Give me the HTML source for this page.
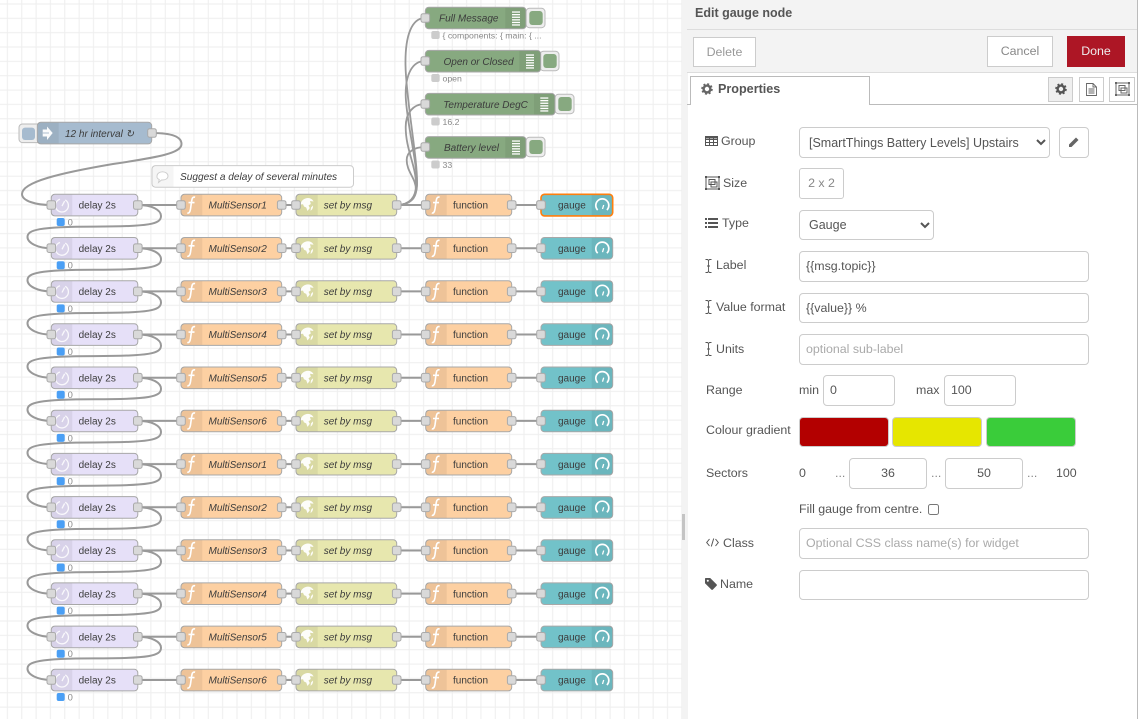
<!DOCTYPE html>
<html lang="en"><head><meta charset="utf-8"><title>Edit gauge node</title>
<style>
html,body{margin:0;padding:0;width:1138px;height:719px;overflow:hidden;background:#fff;font-family:"Liberation Sans",Arial,sans-serif}
#c{position:absolute;left:0;top:0}
#c text{font-family:"Liberation Sans",Arial,sans-serif;font-size:10px;fill:#3c3c3c}
#c text.it{font-style:italic}
#c text.st{font-size:8.7px;fill:#888}
#c text.z{font-size:9.4px;fill:#888}
.w{fill:none;stroke:#999;stroke-width:2}
.n{stroke:#a8a8a8;stroke-width:1}
.p{fill:#d9d9d9;stroke:#aaa;stroke-width:1}
#strip{position:absolute;left:682px;top:0;width:6px;height:719px;background:#f3f3f3}
#grip{position:absolute;left:682px;top:514px;width:3px;height:26px;background:#c4c4c4}
#panel{position:absolute;left:688px;top:0;width:449px;height:719px;background:#fff;border-right:1px solid #bbb;box-sizing:content-box}
#head{position:absolute;left:687px;top:0;width:450px;height:72px;background:#f3f3f3;border-bottom:1px solid #ddd}
#hl{position:absolute;left:687px;top:29px;width:450px;height:1px;background:#ddd}
.t,.b,.i{position:absolute;box-sizing:border-box;font-size:12.4px;color:#555}
.t{line-height:16px;white-space:nowrap}
.b{background:#fff;border:1px solid #ccc;text-align:center}
.i{background:#fff;border:1px solid #ccc;border-radius:4px;padding-left:6px;line-height:28px;height:30px;white-space:nowrap}
.ph{color:#aaa}
select.i{padding:0 0 0 5px;font-family:"Liberation Sans",Arial,sans-serif;font-size:12.5px;appearance:auto;outline:0}
.c{position:absolute;box-sizing:border-box;height:30px;width:90px;top:417px;border:1px solid #ccc;border-radius:4px}
svg.ic{position:absolute;overflow:visible}
</style></head><body>
<svg id="c" width="682" height="719" viewBox="0 0 682 719">
<defs>
<pattern id="g" width="14.35" height="14.35" patternUnits="userSpaceOnUse" x="0.2" y="-3.2"><path d="M7.2 0V14.35M0 7.2H14.35" stroke="#eee" stroke-width="1" fill="none"/></pattern>
<g id="wires"><path class="w" d="M138 0H181M282 0H296M397 0H425.7M512 0H541"/></g>
<g id="loop"><path class="w" d="M138 0C152 0 161 5 161 11C161 19 150 21.6 94 21.6C38 21.6 27.5 25 27.5 32C27.5 38 38 43.2 51 43.2"/></g>
<g id="timer"><path d="M3.2 -5.6A6.5 6.5 0 1 1 -2 -6.2" fill="none" stroke="#fff" stroke-opacity=".85" stroke-width="1.3"/><path d="M0 0.6L2.6 -4.4" stroke="#fff" stroke-opacity=".85" stroke-width="1.3"/></g>
<g id="fn"><path d="M3.6 -7.8C1 -8.5 .5 -6.5 0 -3L-1 4C-1.5 7 -2.5 8.6 -4.2 7.9M-3 -2.4H3" fill="none" stroke="#fff" stroke-width="1.6"/></g>
<g id="globe"><path d="M-6.5 -0.5C-6 -4.5 -2.5 -7 1 -7C3.5 -7 5.8 -5.5 6.5 -3.5L3 -4L3.8 -1L1.5 0.5L2.8 3L0.5 6L-0.8 2.5L-3 1.5L-4 -0.8Z" fill="#fff" fill-opacity=".95"/><path d="M4 2.5L6 0.5C6.3 2.5 5.5 4.5 3.5 5.8Z" fill="#fff" fill-opacity=".9"/></g>
<g id="gg"><path d="M-4.6 5A6.5 6.5 0 1 1 4.6 5" fill="none" stroke="#fff" stroke-width="1.7"/><path d="M0.2 4L1.4 0" stroke="#fff" stroke-width="1.3"/></g>
<g id="row">
<rect class="n" x="51.3" y="-10.7" width="86.5" height="21.6" rx="3.5" fill="#e6e0f8"/><path d="M51.8 -10.2H72.3V10.4H51.8Z" fill="#000" fill-opacity=".06"/>
<use href="#timer" x="62" y="0.5"/>
<rect class="n" x="181" y="-10.7" width="100.7" height="21.6" rx="3.5" fill="#fdd0a2"/><path d="M181.5 -10.2H202.3V10.4H181.5Z" fill="#000" fill-opacity=".06"/>
<use href="#fn" x="191.5"/>
<rect class="n" x="296" y="-10.7" width="100.7" height="21.6" rx="3.5" fill="#e7e7ae"/><path d="M296.5 -10.2H317.7V10.4H296.5Z" fill="#000" fill-opacity=".06"/>
<use href="#globe" x="307"/>
<rect class="n" x="425.7" y="-10.7" width="86" height="21.6" rx="3.5" fill="#fdd0a2"/><path d="M426.2 -10.2H446.7V10.4H426.2Z" fill="#000" fill-opacity=".06"/>
<use href="#fn" x="436"/>
<rect class="n" x="541" y="-10.7" width="71.7" height="21.6" rx="3.5" fill="#72c2c9"/><path d="M591.7 -10.2H612.2V10.4H591.7Z" fill="#000" fill-opacity=".06"/>
<use href="#gg" x="602.3"/>
<rect class="p" x="47" y="-4.3" width="8.6" height="8.6" rx="2"/><rect class="p" x="133.5" y="-4.3" width="8.6" height="8.6" rx="2"/>
<rect class="p" x="176.7" y="-4.3" width="8.6" height="8.6" rx="2"/><rect class="p" x="277.4" y="-4.3" width="8.6" height="8.6" rx="2"/>
<rect class="p" x="291.7" y="-4.3" width="8.6" height="8.6" rx="2"/><rect class="p" x="392.4" y="-4.3" width="8.6" height="8.6" rx="2"/>
<rect class="p" x="421.4" y="-4.3" width="8.6" height="8.6" rx="2"/><rect class="p" x="507.4" y="-4.3" width="8.6" height="8.6" rx="2"/>
<rect class="p" x="536.7" y="-4.3" width="8.6" height="8.6" rx="2"/>
<rect x="56.7" y="13" width="8" height="8" rx="2" fill="#4a9ff5"/>
</g>
<g id="bars" fill="#fff"><rect x="-4" y="-6.6" width="8" height="1.3"/><rect x="-4" y="-4" width="8" height="1.3"/><rect x="-4" y="-1.4" width="8" height="1.3"/><rect x="-4" y="1.2" width="8" height="1.3"/><rect x="-4" y="3.8" width="8" height="1.3"/><rect x="-4" y="6.3" width="8" height="1.3"/></g>
<g id="btn"><rect x="0" y="-9.7" width="19" height="19.4" rx="3.5" fill="#eee" stroke="#bbb"/><rect x="3.3" y="-7" width="13.4" height="14" rx="3" fill="#87a980"/></g>
</defs>
<rect width="682" height="719" fill="url(#g)"/>

<path class="w" d="M152 133C172 133 181.5 137 181.5 144C181.5 153 160 157 113 164C60 173 22 182 22 194C22 201 36 205 51 205"/>
<path class="w" style="stroke-width:1.8" d="M397 205C410 205 416 197 417 185C418 160 406 100 405.5 65C405 35 412 18 425 18"/>
<path class="w" style="stroke-width:1.8" d="M397 205C410 205 417 197 417 185C417 160 406 120 405.7 95C405.5 75 412 61 425 61"/>
<path class="w" style="stroke-width:1.8" d="M397 205C410 205 416 197 416 185C416 165 405.7 150 405.7 127C405.7 113 413 104 425 104"/>
<path class="w" style="stroke-width:1.8" d="M397 205C410 205 416 198 416 190C416 178 406.7 172 406.7 160C406.7 152 414 147 425 147"/>

<g transform="translate(0,205)"><use href="#loop"/><use href="#wires"/></g>
<g transform="translate(0,248.2)"><use href="#loop"/><use href="#wires"/></g>
<g transform="translate(0,291.4)"><use href="#loop"/><use href="#wires"/></g>
<g transform="translate(0,334.5)"><use href="#loop"/><use href="#wires"/></g>
<g transform="translate(0,377.7)"><use href="#loop"/><use href="#wires"/></g>
<g transform="translate(0,420.9)"><use href="#loop"/><use href="#wires"/></g>
<g transform="translate(0,464.1)"><use href="#loop"/><use href="#wires"/></g>
<g transform="translate(0,507.3)"><use href="#loop"/><use href="#wires"/></g>
<g transform="translate(0,550.5)"><use href="#loop"/><use href="#wires"/></g>
<g transform="translate(0,593.6)"><use href="#loop"/><use href="#wires"/></g>
<g transform="translate(0,636.8)"><use href="#loop"/><use href="#wires"/></g>
<g transform="translate(0,680)"><use href="#wires"/></g>

<!-- inject -->
<rect x="19" y="124" width="22" height="18.6" rx="3.5" fill="#eee" stroke="#bbb"/>
<rect x="22" y="127.6" width="13" height="12.4" rx="3" fill="#a6bbcf"/>
<rect class="n" x="37.3" y="122.3" width="114.4" height="21.6" rx="3.5" fill="#a6bbcf"/>
<path d="M37.8 122.8H58.7V143.4H37.8Z" fill="#000" fill-opacity=".06"/>
<path d="M42.7 129.5H47V126.5L52.7 133L47 140V136.5H42.7Z" fill="#fff" fill-opacity=".95"/><path d="M42.7 133H49" stroke="#98aec2" stroke-width=".8"/>
<text class="it" x="65" y="136.8">12 hr interval ↻</text>
<rect class="p" x="147.7" y="128.7" width="8.6" height="8.6" rx="2"/>

<!-- comment -->
<rect x="152" y="165.6" width="201.5" height="21.6" rx="3.5" fill="#fff" stroke="#ccc"/>
<path d="M152.5 166.1H173.5V186.7H152.5Z" fill="#000" fill-opacity=".04"/>
<path d="M157 176c0-2.5 2.5-4.2 5.5-4.2s5.5 1.7 5.5 4.2-2.5 4-5.5 4h-1l-3 2.5 .8-3c-1.5-.6-2.3-1.5-2.3-2.5z" fill="#fff" stroke="#ccc" stroke-width=".9"/>
<text class="it" x="180" y="179.8" style="font-size:10.1px">Suggest a delay of several minutes</text>

<!-- debug -->
<use href="#btn" x="526" y="18"/>
<rect class="n" x="425.3" y="7.2" width="100.7" height="21.6" rx="3.5" fill="#87a980"/><path d="M505.3 7.7H525.5V28.3H505.3Z" fill="#000" fill-opacity=".06"/><use href="#bars" x="516" y="18"/>
<rect class="p" x="421" y="13.7" width="8.6" height="8.6" rx="2"/>
<text class="it" x="439" y="21.5">Full Message</text>
<rect x="431.3" y="31" width="8.4" height="8" rx="2" fill="#ccc"/><text class="st" x="442.5" y="38.3">{ components: { main: { ...</text>

<use href="#btn" x="540" y="61"/>
<rect class="n" x="425.3" y="50.4" width="115.4" height="21.6" rx="3.5" fill="#87a980"/><path d="M519.3 50.9H540.2V71.5H519.3Z" fill="#000" fill-opacity=".06"/><use href="#bars" x="530" y="61"/>
<rect class="p" x="421" y="56.7" width="8.6" height="8.6" rx="2"/>
<text class="it" x="443.5" y="65">Open or Closed</text>
<rect x="431.3" y="74" width="8.4" height="8" rx="2" fill="#ccc"/><text class="st" x="442.5" y="81.3">open</text>

<use href="#btn" x="555" y="104"/>
<rect class="n" x="425.3" y="93.4" width="129.7" height="21.6" rx="3.5" fill="#87a980"/><path d="M534 93.9H554.5V114.5H534Z" fill="#000" fill-opacity=".06"/><use href="#bars" x="544.3" y="104"/>
<rect class="p" x="421" y="99.7" width="8.6" height="8.6" rx="2"/>
<text class="it" x="443.2" y="108">Temperature DegC</text>
<rect x="431.3" y="117.5" width="8.4" height="8" rx="2" fill="#ccc"/><text class="st" x="442.5" y="124.8">16.2</text>

<use href="#btn" x="526" y="147"/>
<rect class="n" x="425.3" y="136.6" width="100.7" height="21.6" rx="3.5" fill="#87a980"/><path d="M505.3 137.1H525.5V157.7H505.3Z" fill="#000" fill-opacity=".06"/><use href="#bars" x="516" y="147"/>
<rect class="p" x="421" y="142.7" width="8.6" height="8.6" rx="2"/>
<text class="it" x="444" y="151">Battery level</text>
<rect x="431.3" y="160.5" width="8.4" height="8" rx="2" fill="#ccc"/><text class="st" x="442.5" y="167.8">33</text>

<!-- rows -->
<g transform="translate(0,205)"><use href="#row"/><text x="78.6" y="3.7">delay 2s</text><text class="z" x="67.6" y="20.4">0</text><text class="it" x="208.5" y="3.7">MultiSensor1</text><text class="it" x="323.7" y="3.7">set by msg</text><text x="453" y="3.7">function</text><text x="558" y="3.7">gauge</text></g>
<rect x="541" y="194.3" width="71.7" height="21.6" rx="3.5" fill="none" stroke="#ff7f0e" stroke-width="1.6"/><rect class="p" x="536.7" y="200.7" width="8.6" height="8.6" rx="2"/>
<g transform="translate(0,248.2)"><use href="#row"/><text x="78.6" y="3.7">delay 2s</text><text class="z" x="67.6" y="20.4">0</text><text class="it" x="208.5" y="3.7">MultiSensor2</text><text class="it" x="323.7" y="3.7">set by msg</text><text x="453" y="3.7">function</text><text x="558" y="3.7">gauge</text></g>
<g transform="translate(0,291.4)"><use href="#row"/><text x="78.6" y="3.7">delay 2s</text><text class="z" x="67.6" y="20.4">0</text><text class="it" x="208.5" y="3.7">MultiSensor3</text><text class="it" x="323.7" y="3.7">set by msg</text><text x="453" y="3.7">function</text><text x="558" y="3.7">gauge</text></g>
<g transform="translate(0,334.5)"><use href="#row"/><text x="78.6" y="3.7">delay 2s</text><text class="z" x="67.6" y="20.4">0</text><text class="it" x="208.5" y="3.7">MultiSensor4</text><text class="it" x="323.7" y="3.7">set by msg</text><text x="453" y="3.7">function</text><text x="558" y="3.7">gauge</text></g>
<g transform="translate(0,377.7)"><use href="#row"/><text x="78.6" y="3.7">delay 2s</text><text class="z" x="67.6" y="20.4">0</text><text class="it" x="208.5" y="3.7">MultiSensor5</text><text class="it" x="323.7" y="3.7">set by msg</text><text x="453" y="3.7">function</text><text x="558" y="3.7">gauge</text></g>
<g transform="translate(0,420.9)"><use href="#row"/><text x="78.6" y="3.7">delay 2s</text><text class="z" x="67.6" y="20.4">0</text><text class="it" x="208.5" y="3.7">MultiSensor6</text><text class="it" x="323.7" y="3.7">set by msg</text><text x="453" y="3.7">function</text><text x="558" y="3.7">gauge</text></g>
<g transform="translate(0,464.1)"><use href="#row"/><text x="78.6" y="3.7">delay 2s</text><text class="z" x="67.6" y="20.4">0</text><text class="it" x="208.5" y="3.7">MultiSensor1</text><text class="it" x="323.7" y="3.7">set by msg</text><text x="453" y="3.7">function</text><text x="558" y="3.7">gauge</text></g>
<g transform="translate(0,507.3)"><use href="#row"/><text x="78.6" y="3.7">delay 2s</text><text class="z" x="67.6" y="20.4">0</text><text class="it" x="208.5" y="3.7">MultiSensor2</text><text class="it" x="323.7" y="3.7">set by msg</text><text x="453" y="3.7">function</text><text x="558" y="3.7">gauge</text></g>
<g transform="translate(0,550.5)"><use href="#row"/><text x="78.6" y="3.7">delay 2s</text><text class="z" x="67.6" y="20.4">0</text><text class="it" x="208.5" y="3.7">MultiSensor3</text><text class="it" x="323.7" y="3.7">set by msg</text><text x="453" y="3.7">function</text><text x="558" y="3.7">gauge</text></g>
<g transform="translate(0,593.6)"><use href="#row"/><text x="78.6" y="3.7">delay 2s</text><text class="z" x="67.6" y="20.4">0</text><text class="it" x="208.5" y="3.7">MultiSensor4</text><text class="it" x="323.7" y="3.7">set by msg</text><text x="453" y="3.7">function</text><text x="558" y="3.7">gauge</text></g>
<g transform="translate(0,636.8)"><use href="#row"/><text x="78.6" y="3.7">delay 2s</text><text class="z" x="67.6" y="20.4">0</text><text class="it" x="208.5" y="3.7">MultiSensor5</text><text class="it" x="323.7" y="3.7">set by msg</text><text x="453" y="3.7">function</text><text x="558" y="3.7">gauge</text></g>
<g transform="translate(0,680)"><use href="#row"/><text x="78.6" y="3.7">delay 2s</text><text class="z" x="67.6" y="20.4">0</text><text class="it" x="208.5" y="3.7">MultiSensor6</text><text class="it" x="323.7" y="3.7">set by msg</text><text x="453" y="3.7">function</text><text x="558" y="3.7">gauge</text></g>
</svg>

<div id="strip"></div><div id="grip"></div>
<div id="panel"></div>
<div id="head"></div><div id="hl"></div>

<div class="t" style="left:695px;top:5px;font-weight:bold;font-size:12.5px">Edit gauge node</div>
<div class="b" style="left:693px;top:37px;width:63px;height:30px;line-height:28px;color:#999">Delete</div>
<div class="b" style="left:987px;top:36px;width:66px;height:31px;line-height:29px;color:#888">Cancel</div>
<div class="b" style="left:1067px;top:36px;width:58px;height:31px;line-height:29px;background:#ad1625;border-color:#ad1625;color:#eee">Done</div>

<div style="position:absolute;left:687px;top:104px;width:450px;height:1px;background:#bbb"></div>
<div style="position:absolute;left:690px;top:76px;width:180px;height:29px;box-sizing:border-box;background:#fff;border:1px solid #bbb;border-bottom:0"></div>
<div class="t" style="left:718px;top:81px;font-weight:bold;font-size:12.6px">Properties</div>
<svg class="ic" style="left:701px;top:83px" width="12" height="12" viewBox="-6 -6 12 12"><circle r="3.4" fill="none" stroke="#666" stroke-width="2.4"/><circle r="4.9" fill="none" stroke="#666" stroke-width="1.8" stroke-dasharray="2 1.85"/></svg>

<div class="b" style="left:1048px;top:77px;width:25px;height:25px;background:#efefef"></div>
<svg class="ic" style="left:1055px;top:83px" width="12" height="12" viewBox="-6 -6 12 12"><circle r="3.4" fill="none" stroke="#555" stroke-width="2.4"/><circle r="4.9" fill="none" stroke="#555" stroke-width="1.8" stroke-dasharray="2 1.85"/></svg>
<div class="b" style="left:1079px;top:77px;width:25px;height:25px"></div>
<svg class="ic" style="left:1086px;top:83px" width="11" height="13" viewBox="0 0 11 13"><path d="M.5 .5H7L10.5 4V12.5H.5ZM7 .5V4H10.5M2.5 6H8.5M2.5 8H8.5M2.5 10H8.5" fill="none" stroke="#666" stroke-width=".9"/></svg>
<div class="b" style="left:1109px;top:77px;width:26px;height:25px"></div>
<svg class="ic" style="left:1115px;top:82px" width="15" height="14" viewBox="0 0 15 14"><path d="M1 1H14V13H1ZM4 3.5H10V8.5H4ZM6 6H12V11H6Z" fill="none" stroke="#666" stroke-width="1"/><path d="M0 0h2v2H0zM13 0h2v2h-2zM0 12h2v2H0zM13 12h2v2h-2z" fill="#666"/></svg>

<!-- Group -->
<svg class="ic" style="left:705px;top:136px" width="13" height="10" viewBox="0 0 13 10"><path d="M.5 .5H12.5V9.5H.5ZM.5 3.5H12.5M.5 6.5H12.5M4.5 .5V9.5M8.5 .5V9.5" fill="none" stroke="#555" stroke-width="1"/><path d="M0 0H13V2.5H0Z" fill="#555"/></svg>
<div class="t" style="left:721px;top:133px">Group</div>
<select class="i" style="left:799px;top:127px;width:251px;height:31px"><option>[SmartThings Battery Levels] Upstairs</option></select>
<div class="b" style="left:1059px;top:127px;width:30px;height:31px;border-radius:4px"></div>
<svg class="ic" style="left:1068px;top:136px" width="12" height="12" viewBox="0 0 12 12"><path d="M1 8.5L8 1.5L10.5 4L3.5 11H1Z" fill="#666"/></svg>

<!-- Size -->
<svg class="ic" style="left:705px;top:176px" width="15" height="14" viewBox="0 0 15 14"><path d="M1 1H14V13H1ZM4 3.5H10V8.5H4ZM6 6H12V11H6Z" fill="none" stroke="#555" stroke-width="1"/><path d="M0 0h2v2H0zM13 0h2v2h-2zM0 12h2v2H0zM13 12h2v2h-2z" fill="#555"/></svg>
<div class="t" style="left:723px;top:174.5px">Size</div>
<div class="b" style="left:799px;top:168px;width:45px;height:31px;line-height:29px;border-radius:3px;color:#888">2 x 2</div>

<!-- Type -->
<svg class="ic" style="left:705px;top:218px" width="13" height="10" viewBox="0 0 13 10"><path d="M0 0h2v2H0zM0 4h2v2H0zM0 8h2v2H0zM3 0h10v2H3zM3 4h10v2H3zM3 8h10v2H3z" fill="#555"/></svg>
<div class="t" style="left:722px;top:215px">Type</div>
<select class="i" style="left:799px;top:210px;width:135px;height:30px"><option>Gauge</option></select>

<!-- Label etc -->
<svg class="ic" style="left:705px;top:259px" width="7" height="14" viewBox="0 0 7 14"><path d="M.5 .5H2.5L3.5 1.5L4.5 .5H6.5M.5 13.5H2.5L3.5 12.5L4.5 13.5H6.5M3.5 1.5V12.5M2 7H5" fill="none" stroke="#555" stroke-width=".9"/></svg>
<div class="t" style="left:716px;top:257px">Label</div>
<div class="i" style="left:799px;top:251px;width:290px;height:31px;line-height:29px">{{msg.topic}}</div>

<svg class="ic" style="left:705px;top:300px" width="7" height="14" viewBox="0 0 7 14"><path d="M.5 .5H2.5L3.5 1.5L4.5 .5H6.5M.5 13.5H2.5L3.5 12.5L4.5 13.5H6.5M3.5 1.5V12.5M2 7H5" fill="none" stroke="#555" stroke-width=".9"/></svg>
<div class="t" style="left:716px;top:298.5px">Value format</div>
<div class="i" style="left:799px;top:293px;width:290px;">{{value}} %</div>

<svg class="ic" style="left:705px;top:342px" width="7" height="14" viewBox="0 0 7 14"><path d="M.5 .5H2.5L3.5 1.5L4.5 .5H6.5M.5 13.5H2.5L3.5 12.5L4.5 13.5H6.5M3.5 1.5V12.5M2 7H5" fill="none" stroke="#555" stroke-width=".9"/></svg>
<div class="t" style="left:716px;top:340.5px">Units</div>
<div class="i ph" style="left:799px;top:334px;width:290px;height:31px;line-height:29px">optional sub-label</div>

<!-- Range -->
<div class="t" style="left:706px;top:381.5px">Range</div>
<div class="t" style="left:799px;top:381.5px">min</div>
<div class="i" style="left:823px;top:375px;width:72px;height:31px;line-height:29px">0</div>
<div class="t" style="left:916px;top:381.5px">max</div>
<div class="i" style="left:944px;top:375px;width:72px;height:31px;line-height:29px">100</div>

<!-- Colour -->
<div class="t" style="left:706px;top:422px">Colour gradient</div>
<div class="c" style="left:799px;background:#b30000"></div>
<div class="c" style="left:892px;background:#e6e600"></div>
<div class="c" style="left:986px;background:#3acc3a"></div>

<!-- Sectors -->
<div class="t" style="left:706px;top:464.5px">Sectors</div>
<div class="t" style="left:799px;top:464.5px">0</div>
<div class="t" style="left:835px;top:464.5px;color:#888">...</div>
<div class="i" style="left:849px;top:458px;width:78px;height:31px;line-height:28px;text-align:center;padding:0">36</div>
<div class="t" style="left:931px;top:464.5px;color:#888">...</div>
<div class="i" style="left:945px;top:458px;width:78px;height:31px;line-height:28px;text-align:center;padding:0">50</div>
<div class="t" style="left:1027px;top:464.5px;color:#888">...</div>
<div class="t" style="left:1056px;top:464.5px">100</div>

<div class="t" style="left:799px;top:501px">Fill gauge from centre.</div>
<div style="position:absolute;left:928px;top:504px;width:11px;height:11px;box-sizing:border-box;border:1px solid #777;border-radius:2.5px;background:#fff"></div>

<!-- Class -->
<svg class="ic" style="left:706px;top:538px" width="13" height="9" viewBox="0 0 13 9"><path d="M3.5 1L.7 4.5L3.5 8M9.5 1L12.3 4.5L9.5 8M7.7 .5L5.3 8.5" fill="none" stroke="#555" stroke-width="1"/></svg>
<div class="t" style="left:723px;top:534.5px">Class</div>
<div class="i ph" style="left:799px;top:528px;width:290px;height:31px;line-height:29px">Optional CSS class name(s) for widget</div>

<!-- Name -->
<svg class="ic" style="left:705px;top:578px" width="12" height="12" viewBox="0 0 12 12"><path d="M0 .8C0 .3 .3 0 .8 0H5.2L11.6 6.4C12 6.8 12 7.4 11.6 7.8L7.8 11.6C7.4 12 6.8 12 6.4 11.6L0 5.2Z" fill="#555"/><circle cx="2.8" cy="2.8" r="1" fill="#fff"/></svg>
<div class="t" style="left:720px;top:575.5px">Name</div>
<div class="i" style="left:799px;top:570px;width:290px;"></div>
</body></html>
